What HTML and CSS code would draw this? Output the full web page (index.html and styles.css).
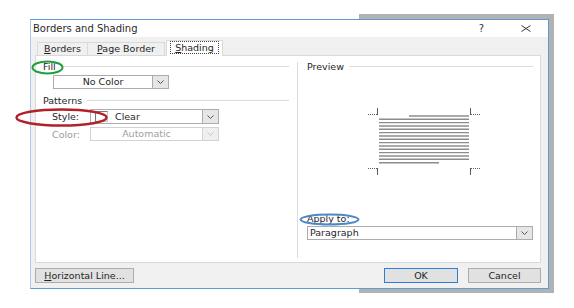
FILE: index.html
```html
<!DOCTYPE html>
<html lang="en">
<head>
  <meta charset="UTF-8">
  <title>Borders and Shading</title>
  <link rel="stylesheet" href="styles.css">
</head>
<body>
  <div class="backdrop"></div>

  <div class="dialog">
    <div class="titlebar">
      <span class="title">Borders and Shading</span>
      <span class="help">?</span>
      <svg class="close" width="10" height="7" viewBox="0 0 10 7">
        <path d="M0.5 0.5 L9.5 6.5 M9.5 0.5 L0.5 6.5" stroke="#333" stroke-width="1" fill="none"/>
      </svg>
    </div>

    <div class="body">
      <div class="tabs">
        <div class="tab tab-borders"><u>B</u>orders</div>
        <div class="tab tab-page"><u>P</u>age Border</div>
        <div class="tab tab-shading active"><span class="focus"><u>S</u>hading</span></div>
      </div>

      <div class="panel">
        <div class="left">
          <div class="group-label"><span>Fill</span><i></i></div>
          <div class="combo fill-combo">
            <span class="value center">No Color</span>
            <span class="drop"><svg width="7" height="4" viewBox="0 0 7 4"><polyline points="0.5,0.5 3.5,3.5 6.5,0.5" fill="none" stroke="#555"/></svg></span>
          </div>

          <div class="group-label patterns"><span>Patterns</span><i></i></div>
          <div class="row style-row">
            <span class="row-label">Style:</span>
            <div class="combo pattern-combo tall">
              <span class="swatch"></span>
              <span class="value">Clear</span>
              <span class="drop"><svg width="7" height="4" viewBox="0 0 7 4"><polyline points="0.5,0.5 3.5,3.5 6.5,0.5" fill="none" stroke="#555"/></svg></span>
            </div>
          </div>
          <div class="row color-row disabled">
            <span class="row-label">Color:</span>
            <div class="combo pattern-combo">
              <span class="value center">Automatic</span>
              <span class="drop"><svg width="7" height="4" viewBox="0 0 7 4"><polyline points="0.5,0.5 3.5,3.5 6.5,0.5" fill="none" stroke="#c4c4c4"/></svg></span>
            </div>
          </div>
        </div>

        <div class="right">
          <div class="group-label preview-label"><span>Preview</span><i></i></div>
          <svg class="preview" width="112" height="67" viewBox="0 0 112 67">
            <g stroke="#5a5a5a" stroke-width="1" fill="none">
              <path d="M0 6.5 H9" stroke-dasharray="1 1"/>
              <path d="M9.5 0 V7"/>
              <path d="M103 6.5 H112" stroke-dasharray="1 1"/>
              <path d="M102.5 0 V7"/>
              <path d="M0 60.5 H9" stroke-dasharray="1 1"/>
              <path d="M9.5 60 V67"/>
              <path d="M103 60.5 H112" stroke-dasharray="1 1"/>
              <path d="M102.5 60 V67"/>
            </g>
            <g stroke="#8c8c8c" stroke-width="1.4">
              <path d="M41 8 H101"/>
              <path d="M11 11.3 H101"/>
              <path d="M11 14.6 H101"/>
              <path d="M11 18 H101"/>
              <path d="M11 21.3 H101"/>
              <path d="M11 24.6 H101"/>
              <path d="M11 28 H101"/>
              <path d="M11 31.3 H101"/>
              <path d="M11 34.6 H101"/>
              <path d="M11 38 H101"/>
              <path d="M11 41.3 H101"/>
              <path d="M11 44.6 H101"/>
              <path d="M11 48 H101"/>
              <path d="M11 51.3 H101"/>
              <path d="M11 54.8 H71"/>
            </g>
          </svg>
          <div class="apply-label">Apply to:</div>
          <div class="combo apply-combo">
            <span class="value">Paragraph</span>
            <span class="drop"><svg width="7" height="4" viewBox="0 0 7 4"><polyline points="0.5,0.5 3.5,3.5 6.5,0.5" fill="none" stroke="#555"/></svg></span>
          </div>
        </div>
      </div>

      <div class="footer">
        <button class="btn hline"><u>H</u>orizontal Line...</button>
        <button class="btn ok">OK</button>
        <button class="btn cancel">Cancel</button>
      </div>
    </div>
  </div>

  <!-- hand drawn marks over the screenshot -->
  <svg class="marks" width="574" height="308" viewBox="0 0 574 308">
    <ellipse cx="47.5" cy="67.5" rx="15" ry="6" fill="none" stroke="#1f9e3a" stroke-width="2"/>
    <ellipse cx="61.5" cy="117.5" rx="45" ry="8" fill="none" stroke="#b3202a" stroke-width="2.5"/>
    <ellipse cx="329.5" cy="219.5" rx="29" ry="5" fill="none" stroke="#4b88c9" stroke-width="2"/>
  </svg>
</body>
</html>
```

FILE: styles.css
```css
* {
  box-sizing: border-box;
}

body {
  margin: 0;
  width: 574px;
  height: 308px;
  overflow: hidden;
  position: relative;
  background: #fff;
  font-family: 'DejaVu Sans', sans-serif;
  font-size: 9.5px;
  color: #1f1f1f;
}

.backdrop {
  position: absolute;
  left: 359px;
  top: 14px;
  width: 195px;
  height: 279px;
  background: #b2b2b2;
}

.dialog {
  position: relative;
  margin: 19px 0 0 30px;
  width: 519px;
  height: 270px;
  border: 1px solid #5b9bd7;
  border-left-color: #a9c9e8;
  background: #f0f0f0;
  display: flex;
  flex-direction: column;
}

.titlebar {
  height: 17px;
  background: #fff;
  display: flex;
  align-items: center;
  padding-left: 2px;
}

.title {
  font-size: 10px;
  color: #2a2a2a;
}

.help {
  margin-left: auto;
  font-size: 10px;
  color: #333;
}

.close {
  margin: 0 17px 0 37px;
}

.body {
  flex: 1;
  padding-left: 4px;
}

.tabs {
  height: 19px;
  display: flex;
  align-items: flex-end;
  padding-left: 2px;
}

.tab {
  height: 13px;
  margin-bottom: 1px;
  line-height: 12px;
  text-align: center;
  border: 1px solid #d9d9d9;
  border-bottom: none;
  background: #f0f0f0;
}

.tab-borders {
  width: 51px;
}

.tab-page {
  width: 77px;
  border-left: none;
}

.tab-shading {
  width: 57px;
  margin-left: 1px;
}

.tab.active {
  height: 16px;
  margin-bottom: 0;
  background: #fff;
  position: relative;
  z-index: 1;
  line-height: 14px;
}

.focus {
  border: 1px dotted #444;
  padding: 0 4px;
}

.panel {
  margin-top: -1px;
  width: 506px;
  height: 208px;
  background: #fff;
  border: 1px solid #d9d9d9;
  display: flex;
}

.left {
  width: 261px;
  padding: 4px 8px 0 7px;
}

.group-label {
  display: flex;
  align-items: center;
  height: 12px;
  gap: 5px;
}

.group-label i {
  flex: 1;
  border-top: 1px solid #dcdcdc;
}

.combo {
  display: flex;
  align-items: center;
  height: 14px;
  border: 1px solid #acacac;
  background: #fff;
}

.combo .value {
  flex: 1;
  padding-left: 2px;
  line-height: 12px;
}

.combo .value.center {
  text-align: center;
  padding-left: 0;
}

.combo .drop {
  width: 16px;
  height: 100%;
  border-left: 1px solid #acacac;
  background: #e6e6e6;
  display: flex;
  align-items: center;
  justify-content: center;
}

.fill-combo {
  width: 116px;
  margin: 3px 0 0 10px;
}

.patterns {
  margin-top: 5px;
}

.row {
  display: flex;
  align-items: center;
  padding-left: 9px;
  margin-top: 3px;
}

.row-label {
  width: 38px;
}

.pattern-combo {
  width: 129px;
}

.pattern-combo.tall {
  height: 15px;
}

.swatch {
  width: 13px;
  height: 11px;
  margin-left: 4px;
  border: 1px solid #7a7a7a;
  border-right-color: #c8c8c8;
  border-bottom-color: #c8c8c8;
}

.pattern-combo .swatch + .value {
  padding-left: 7px;
}

.disabled .row-label {
  color: #9a9a9a;
}

.disabled .combo {
  border-color: #d2d2d2;
}

.disabled .combo .value {
  color: #a0a0a0;
}

.disabled .combo .drop {
  border-left-color: #d2d2d2;
  background: #efefef;
}

.right {
  width: 243px;
  margin: 6px 0 4px 0;
  border-left: 1px solid #dcdcdc;
  padding: 0 7px 0 9px;
}

.preview-label {
  height: 9px;
}

.preview {
  display: block;
  margin: 37px 0 0 61px;
}

.apply-label {
  margin-top: 38px;
  line-height: 12px;
}

.apply-combo {
  margin-top: 1px;
  width: 226px;
}

.footer {
  display: flex;
  width: 506px;
  margin-top: 5px;
}

.btn {
  height: 15px;
  padding: 0;
  font-family: inherit;
  font-size: 9.5px;
  line-height: 12px;
  color: #1f1f1f;
  background: #e1e1e1;
  border: 1px solid #adadad;
}

.hline {
  width: 99px;
}

.ok {
  width: 74px;
  margin-left: auto;
  border-color: #2b7fd4;
}

.cancel {
  width: 73px;
  margin-left: 10px;
}

.marks {
  position: absolute;
  left: 0;
  top: 0;
  pointer-events: none;
}
```
